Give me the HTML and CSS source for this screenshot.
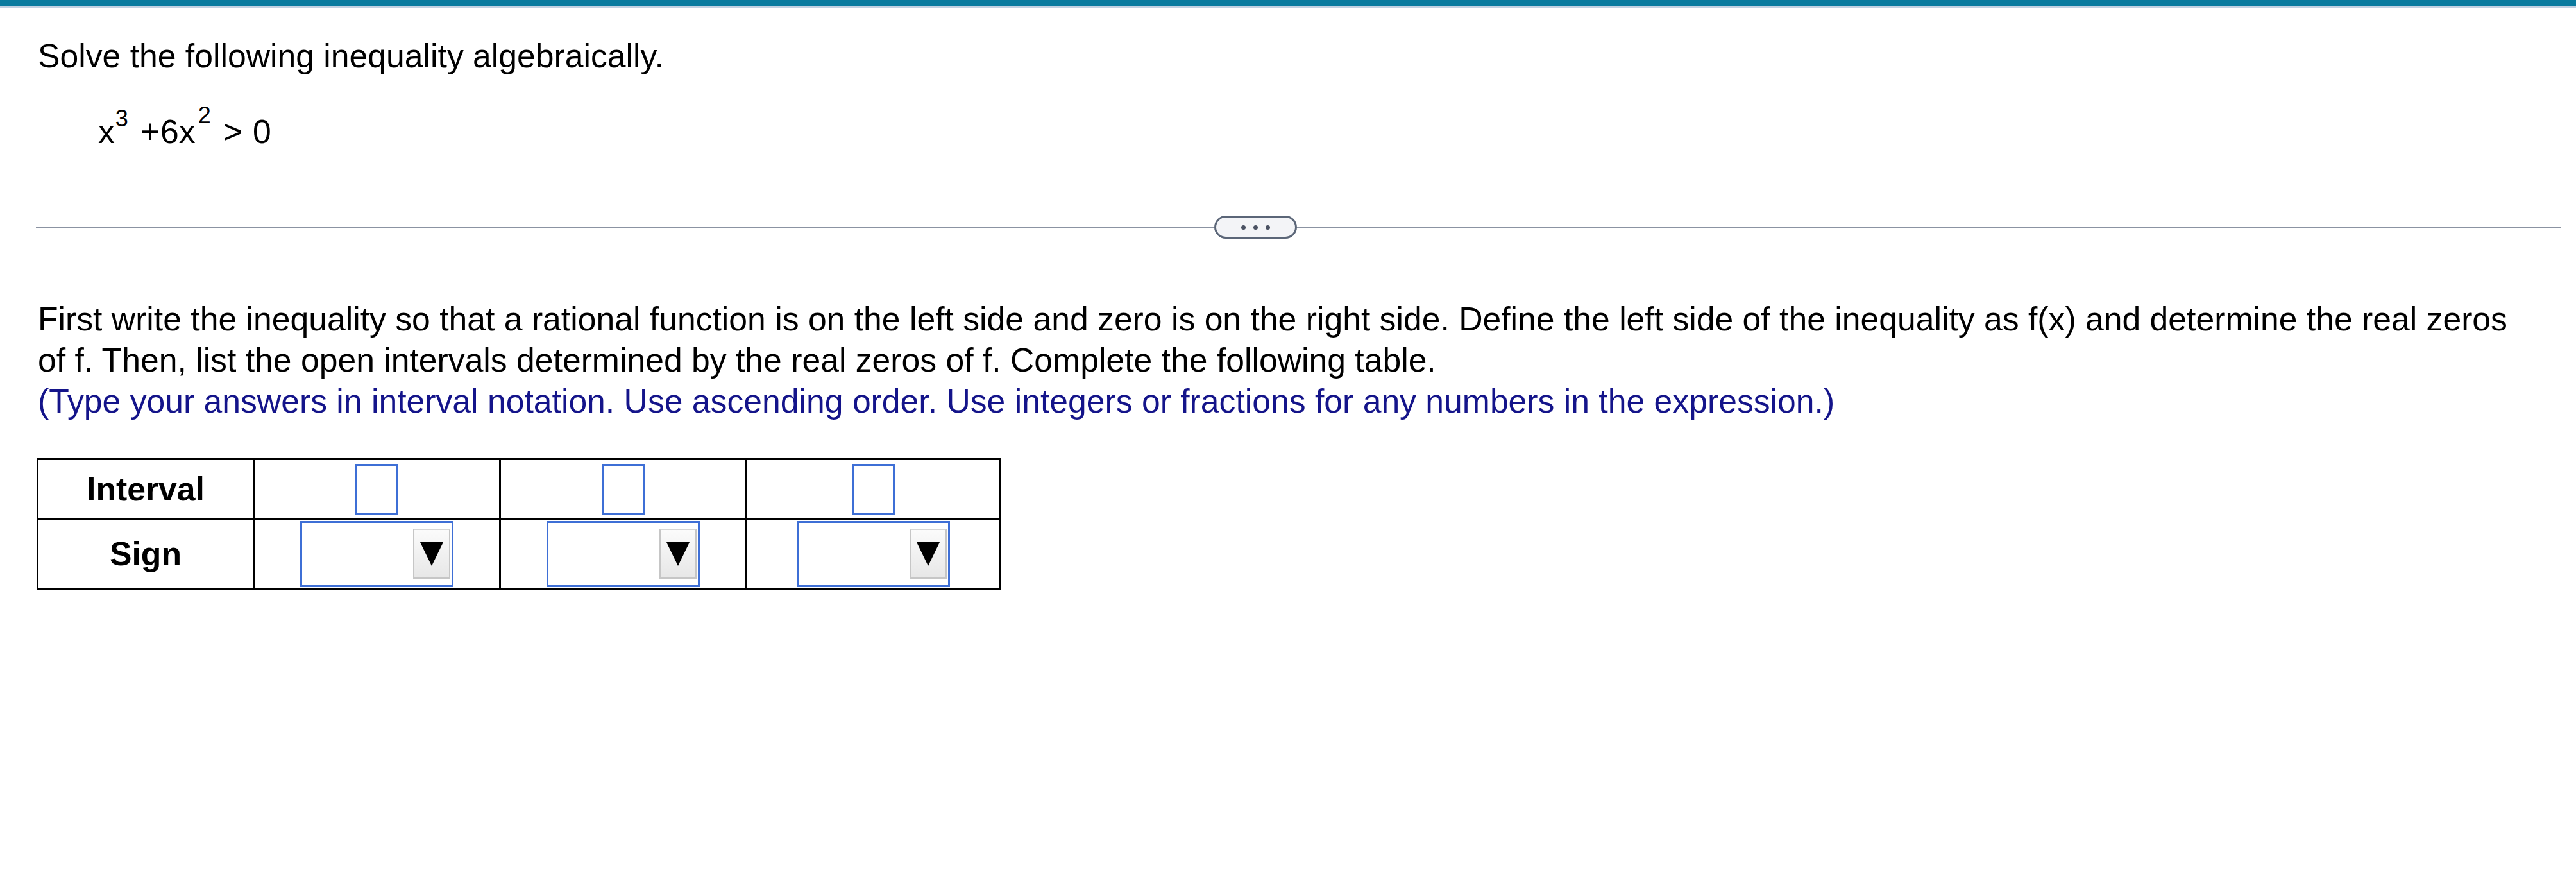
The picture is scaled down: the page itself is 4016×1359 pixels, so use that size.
FILE: index.html
```html
<!DOCTYPE html>
<html lang="en">
<head>
<meta charset="utf-8">
<title>Solve the inequality</title>
<link rel="stylesheet" href="styles.css">
</head>
<body>
<div class="topbar"></div>
<main class="page">
  <p class="prompt">Solve the following inequality algebraically.</p>
  <p class="equation">x<sup class="sup sup-three">3</sup><span class="op op-plus">+</span>6x<sup class="sup sup-two">2</sup><span class="op op-gt">&gt;</span><span class="op-zero">0</span></p>

  <div class="divider">
    <span class="rule rule-left"></span>
    <span class="pill"><span class="dot"></span><span class="dot"></span><span class="dot"></span></span>
    <span class="rule rule-right"></span>
  </div>

  <div class="instructions">
    <p class="task">First write the inequality so that a rational function is on the left side and zero is on the right side. Define the left side of the inequality as f(x) and determine the real zeros of f. Then, list the open intervals determined by the real zeros of f. Complete the following table.</p>
    <p class="note">(Type your answers in interval notation. Use ascending order. Use integers or fractions for any numbers in the expression.)</p>
  </div>

  <table class="sign-table">
    <colgroup>
      <col class="col-label">
      <col class="col-a">
      <col class="col-b">
      <col class="col-c">
    </colgroup>
    <tr class="row-interval">
      <th>Interval</th>
      <td><input class="answer-box" type="text" aria-label="Interval 1"></td>
      <td><input class="answer-box" type="text" aria-label="Interval 2"></td>
      <td><input class="answer-box" type="text" aria-label="Interval 3"></td>
    </tr>
    <tr class="row-sign">
      <th>Sign</th>
      <td><span class="sign-select"><span class="select-btn"><span class="tri"></span></span></span></td>
      <td><span class="sign-select"><span class="select-btn"><span class="tri"></span></span></span></td>
      <td><span class="sign-select"><span class="select-btn"><span class="tri"></span></span></span></td>
    </tr>
  </table>
</main>
</body>
</html>
```

FILE: styles.css
```css
html, body {
  margin: 0;
  padding: 0;
  background: #ffffff;
}

body {
  font-family: "Liberation Sans", Arial, Helvetica, sans-serif;
  font-size: 51.7px;
  color: #000000;
}

.topbar {
  height: 10px;
  background: #0a7b9f;
  border-bottom: 3px solid #c2d1e2;
}

.page {
  padding: 42px 23px 0 56px;
}

.prompt {
  margin: 0;
  padding-left: 3px;
  line-height: 64px;
}

.equation {
  margin: 54px 0 0 97px;
  line-height: 64px;
  white-space: nowrap;
}

.sup {
  font-size: 36px;
  line-height: 0;
}

.sup-three {
  vertical-align: 26px;
  margin-left: 1px;
}

.sup-two {
  vertical-align: 31px;
  margin-left: 4px;
}

.op-plus {
  margin-left: 19px;
  margin-right: 1px;
}

.op-gt {
  margin-left: 19px;
  margin-right: 16px;
}

.divider {
  margin-top: 99px;
  display: flex;
  align-items: center;
  height: 36px;
}

.rule {
  height: 3px;
  background: #8b93a2;
}

.rule-left {
  flex: 0 0 1837px;
}

.rule-right {
  flex: 1 1 auto;
}

.pill {
  flex: 0 0 auto;
  box-sizing: border-box;
  width: 129px;
  height: 36px;
  border: 3px solid #5b6678;
  border-radius: 18px;
  background: #f3f4f7;
  display: flex;
  align-items: center;
  justify-content: center;
  gap: 12px;
}

.dot {
  width: 7px;
  height: 7px;
  border-radius: 50%;
  background: #4b5263;
}

.instructions {
  margin-top: 93px;
  padding: 0 30px 0 3px;
  line-height: 64px;
}

.task {
  margin: 0;
}

.note {
  margin: 0;
  color: #14148a;
}

.sign-table {
  margin-top: 57px;
  margin-left: 1px;
  border-collapse: collapse;
  table-layout: fixed;
  width: 1500px;
  border: 3px solid #000;
}

.col-label { width: 337px; }
.col-a { width: 384px; }
.col-b { width: 384px; }
.col-c { width: 395px; }

.sign-table th,
.sign-table td {
  border: 3px solid #000;
  padding: 0;
  text-align: center;
  vertical-align: middle;
}

.sign-table th {
  font-weight: bold;
}

.row-interval {
  height: 93px;
}

.row-sign {
  height: 109px;
}

.answer-box {
  box-sizing: border-box;
  width: 67px;
  height: 79px;
  margin: 0;
  padding: 0;
  border: 3px solid #3e6fd6;
  border-radius: 0;
  background: #ffffff;
  vertical-align: middle;
  display: inline-block;
}

.sign-select {
  box-sizing: border-box;
  display: inline-flex;
  justify-content: flex-end;
  align-items: center;
  width: 239px;
  height: 103px;
  padding-right: 2px;
  border: 3px solid #3e6fd6;
  background: #ffffff;
  vertical-align: middle;
}

.select-btn {
  box-sizing: border-box;
  width: 58px;
  height: 78px;
  border: 2px solid #c6c6c6;
  border-top-color: #d6d6d6;
  background: linear-gradient(#fbfbfb, #e7e7e7);
  display: flex;
  align-items: center;
  justify-content: center;
}

.tri {
  width: 0;
  height: 0;
  border-left: 18px solid transparent;
  border-right: 18px solid transparent;
  border-top: 37px solid #000;
}
```
